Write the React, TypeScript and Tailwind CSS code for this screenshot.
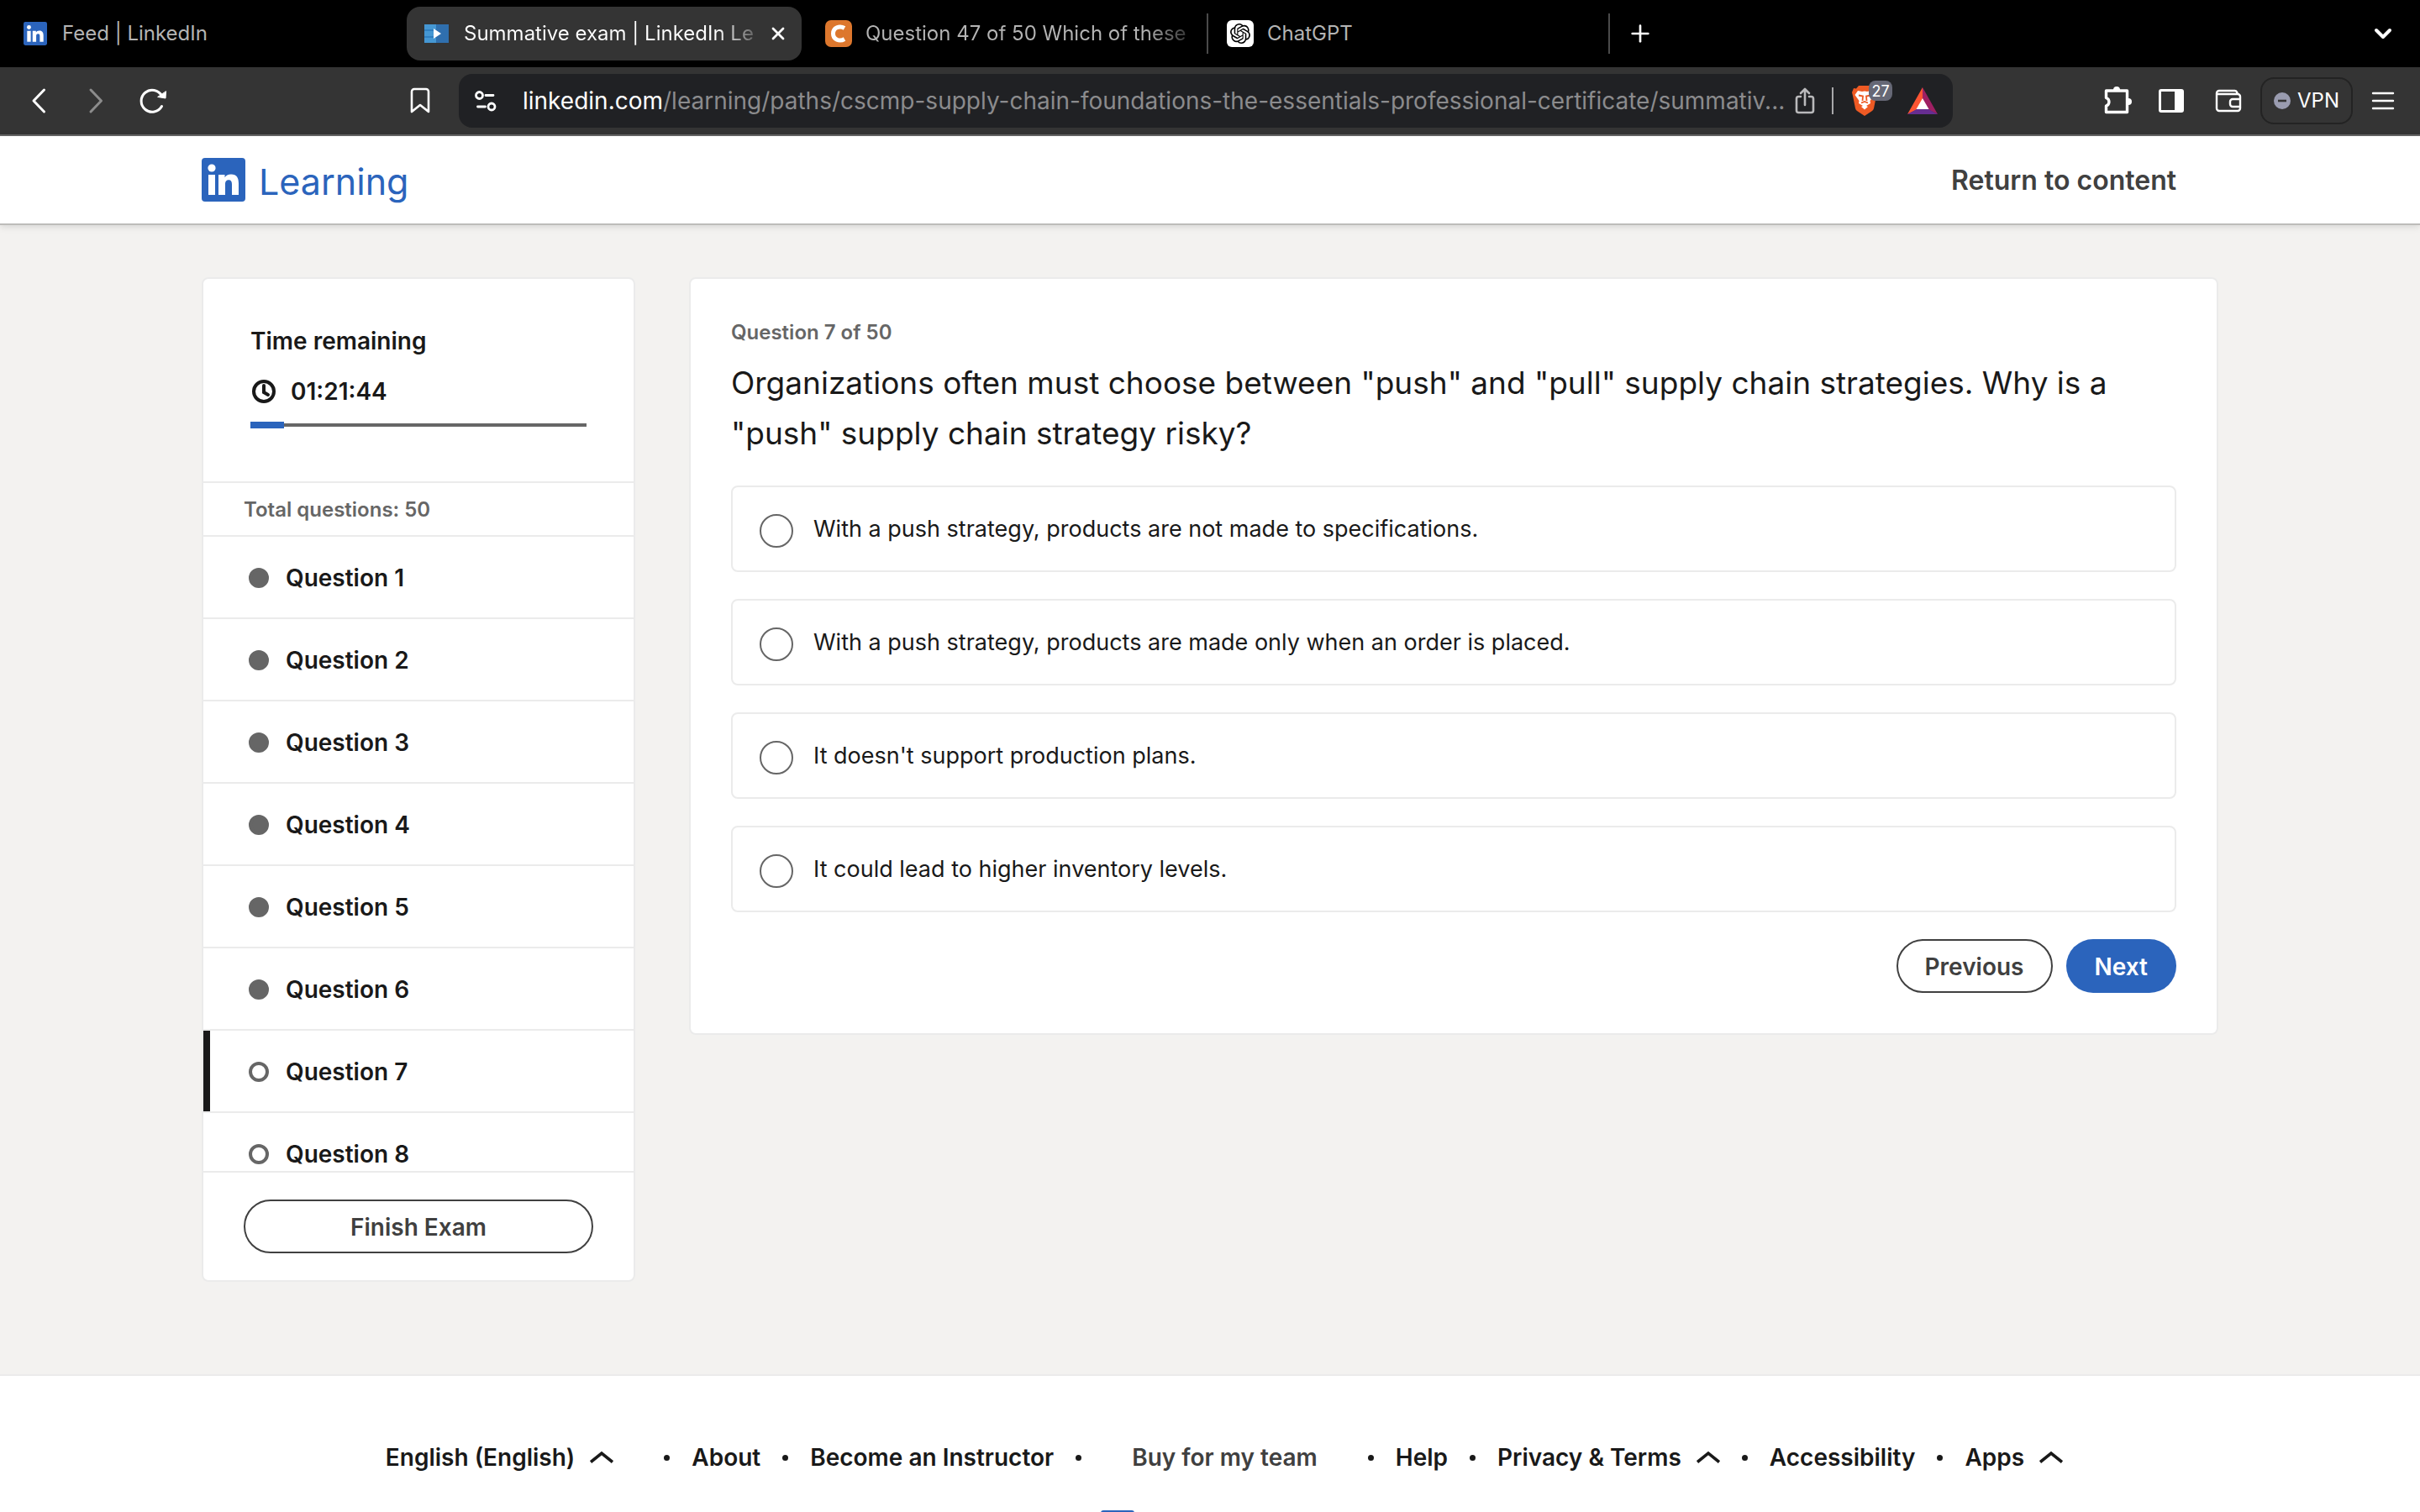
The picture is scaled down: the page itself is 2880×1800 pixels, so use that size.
import { useState } from "react"
import { SiOpenai } from "react-icons/si"
import { ChevronDown, Plus, X } from "lucide-react"

type Question = { id: number; answered: boolean }

const QUESTIONS: Question[] = [
  { id: 1, answered: true },
  { id: 2, answered: true },
  { id: 3, answered: true },
  { id: 4, answered: true },
  { id: 5, answered: true },
  { id: 6, answered: true },
  { id: 7, answered: false },
  { id: 8, answered: false },
]

const OPTIONS = [
  "With a push strategy, products are not made to specifications.",
  "With a push strategy, products are made only when an order is placed.",
  "It doesn't support production plans.",
  "It could lead to higher inventory levels.",
]

function LinkedInMark({ className }: { className: string }) {
  return (
    <svg viewBox="0 0 52 52" className={className} aria-hidden="true">
      <rect width="52" height="52" rx="4" fill="#2b64bc" />
      <circle cx="12" cy="12" r="4.6" fill="#fff" />
      <rect x="8" y="20" width="8" height="24" fill="#fff" />
      <path
        d="M20 20h7.500v3.300c1.300-2.300 3.900-3.900 7.500-3.900 7 0 9 4.500 9 11V44h-8V31.800c0-3-.6-5.500-3.900-5.500-3.300 0-4.100 2.500-4.100 5.300V44h-8z"
        fill="#fff"
      />
    </svg>
  )
}

function PlayFavicon() {
  return (
    <svg viewBox="0 0 29 22" className="h-[22px] w-[29px] shrink-0" aria-hidden="true">
      <rect width="29" height="22" fill="#2f6fae" />
      <rect width="14" height="22" fill="#4597d3" />
      <path d="M0 7h14M0 15h14" stroke="#2f7fc0" strokeWidth="2" />
      <path d="M11 5l9 6-9 6z" fill="#fff" />
    </svg>
  )
}

function CheggFavicon() {
  return (
    <svg viewBox="0 0 32 32" className="size-8 shrink-0" aria-hidden="true">
      <rect width="32" height="32" rx="7" fill="#dd772d" />
      <path d="M23 9.500C17 6 9.500 9 9.500 16S17 26 23 22.500" fill="none" stroke="#fff" strokeWidth="5" />
    </svg>
  )
}

function TabBar() {
  return (
    <div className="flex h-20 items-center bg-black text-[24px] text-[#b4b4b4]">
      <div className="flex w-[484px] shrink-0 items-center gap-[18px] pl-7">
        <LinkedInMark className="size-7 shrink-0" />
        <span>Feed | LinkedIn</span>
      </div>
      <div className="flex h-16 w-[470px] shrink-0 items-center rounded-2xl bg-[#343434] pl-[21px] pr-4 text-white">
        <PlayFavicon />
        <span className="ml-[18px] mr-2 flex-1 whitespace-nowrap bg-linear-to-r from-white from-85% to-white/10 bg-clip-text text-transparent">
          Summative exam | LinkedIn Le
        </span>
        <button aria-label="Close tab">
          <X className="size-6" strokeWidth={2.8} />
        </button>
      </div>
      <div className="flex h-12 w-[484px] shrink-0 items-center gap-4 border-r-2 border-[#4a4a4a] pl-7">
        <CheggFavicon />
        <span className="w-[390px] whitespace-nowrap bg-linear-to-r from-[#b4b4b4] from-85% to-[#b4b4b4]/20 bg-clip-text text-transparent">
          Question 47 of 50 Which of these
        </span>
      </div>
      <div className="flex h-12 w-[478px] shrink-0 items-center gap-4 border-r-2 border-[#4a4a4a] pl-[22px]">
        <span className="flex size-8 items-center justify-center rounded-md bg-white text-black">
          <SiOpenai className="size-6" />
        </span>
        <span>ChatGPT</span>
      </div>
      <button aria-label="New tab" className="ml-5 text-white">
        <Plus className="size-8" strokeWidth={2} />
      </button>
      <button aria-label="Search tabs" className="ml-auto mr-7 text-white">
        <ChevronDown className="size-8" strokeWidth={3} />
      </button>
    </div>
  )
}

function Toolbar() {
  return (
    <div className="flex h-[82px] items-center border-b-2 border-[#666] bg-[#343434] text-white">
      <button aria-label="Back" className="ml-8">
        <svg viewBox="0 0 30 32" className="h-8 w-[30px]" fill="none" stroke="currentColor" strokeWidth="3" strokeLinecap="round" strokeLinejoin="round">
          <path d="M20.500 3L8 16l12.500 13" />
        </svg>
      </button>
      <button aria-label="Forward" className="ml-9 text-[#8c8c8c]">
        <svg viewBox="0 0 30 32" className="h-8 w-[30px]" fill="none" stroke="currentColor" strokeWidth="3" strokeLinecap="round" strokeLinejoin="round">
          <path d="M10 3l12.500 13L10 29" />
        </svg>
      </button>
      <button aria-label="Reload" className="ml-9">
        <svg viewBox="0 0 36 32" className="h-8 w-9" fill="none" stroke="currentColor" strokeWidth="3" strokeLinecap="round">
          <path d="M28.500 22.500A13 13 0 1 1 28.500 10" />
          <path d="M24 11.500l9 1.500.500-8z" fill="currentColor" strokeWidth="1" strokeLinejoin="round" />
        </svg>
      </button>
      <button aria-label="Bookmark this page" className="ml-[288px]">
        <svg viewBox="0 0 24 32" className="h-8 w-6" fill="none" stroke="currentColor" strokeWidth="2.600" strokeLinejoin="round">
          <path d="M2 5a3 3 0 0 1 3-3h14a3 3 0 0 1 3 3v24l-10-8-10 8z" />
        </svg>
      </button>
      <div className="ml-[34px] mr-[178px] flex h-16 min-w-0 flex-1 items-center rounded-2xl bg-[#202124] pl-[18px] pr-[18px]">
        <svg viewBox="0 0 28 26" className="h-[26px] w-7 shrink-0" fill="none" stroke="currentColor" strokeWidth="2.800" strokeLinecap="round" aria-hidden="true">
          <circle cx="6.500" cy="6.500" r="4" />
          <path d="M14 6.500h9M4.500 20h9" />
          <circle cx="21" cy="20" r="4" />
        </svg>
        <p className="ml-[30px] min-w-0 flex-1 whitespace-nowrap text-[28px] text-[#8b8b8d]">
          <span className="text-white">linkedin.com</span>
          /learning/paths/cscmp-supply-chain-foundations-the-essentials-professional-certificate/summativ...
        </p>
        <button aria-label="Share" className="text-[#b9b9bb]">
          <svg viewBox="0 0 24 32" className="h-8 w-6" fill="none" stroke="currentColor" strokeWidth="2.600" strokeLinecap="round" strokeLinejoin="round">
            <path d="M7 11H4.500A2.500 2.500 0 0 0 2 13.500v14A2.500 2.500 0 0 0 4.500 30h15a2.500 2.500 0 0 0 2.500-2.500v-14a2.500 2.500 0 0 0-2.500-2.500H17M12 21V2M7 7l5-5 5 5" />
          </svg>
        </button>
        <span className="ml-5 h-8 w-[2px] bg-[#a8a8aa]" />
        <button aria-label="Brave Shields" className="relative ml-[22px]">
          <svg viewBox="0 0 30 36" className="h-9 w-[30px]">
            <path d="M8 0h14l3 3.500 3-.5 2 5-1 4-3 15q-.5 2-2 3l-9 6-9-6q-1.500-1-2-3L1 12 0 8l2-5 3 .5z" fill="#ee5a24" />
            <path d="M7 6l5 1 3-.5 3 .5 5-1 3.500 5-5 7 .5 3-5 3-2 .500-2-.5-5-3 .5-3-5-7z" fill="#fff" />
            <path d="M8 11.500l5 1-.5 5.500M22 11.500l-5 1 .500 5.500M11 20.500l4-1.500 4 1.500" fill="none" stroke="#ee5a24" strokeWidth="1.800" />
            <path d="M11 25l4-2 4 2-4 3.500z" fill="#fff" />
          </svg>
          <span className="absolute -top-1.5 left-5 flex h-6 w-7 items-center justify-center rounded-lg bg-[#666876] text-[18px] text-white">
            27
          </span>
        </button>
        <button aria-label="Brave Rewards" className="ml-9">
          <svg viewBox="0 0 36 32" className="h-8 w-9">
            <path d="M18 0L0 32l12-6 6-11z" fill="#ff5533" />
            <path d="M18 0l18 32-12-6-6-11z" fill="#9e1f63" />
            <path d="M0 32h36l-11-6H11z" fill="#662d91" />
            <path d="M18 13l7.500 13h-15z" fill="#fff" />
          </svg>
        </button>
      </div>
      <button aria-label="Extensions">
        <svg viewBox="0 0 36 36" className="size-9" fill="none" stroke="currentColor" strokeWidth="3.400" strokeLinejoin="round">
          <path d="M4.500 6h25v25.500h-25v-7.500a5 5 0 0 0 0-9.500z" />
          <path d="M13 5a4 4 0 0 1 8 0zM31 15a4 4 0 0 1 0 8z" fill="currentColor" stroke="none" />
        </svg>
      </button>
      <button aria-label="Side panel" className="ml-[30px]">
        <svg viewBox="0 0 32 28" className="h-7 w-8">
          <rect x="2.500" y="1.500" width="27" height="25" rx="1.500" fill="none" stroke="currentColor" strokeWidth="3" />
          <rect x="20" y="1" width="10" height="26" fill="currentColor" />
        </svg>
      </button>
      <button aria-label="Wallet" className="ml-9">
        <svg viewBox="0 0 32 28" className="h-7 w-8" fill="none" stroke="currentColor" strokeWidth="2.400" strokeLinejoin="round">
          <path d="M27 6l-1-2.500A3 3 0 0 0 23.500 2H5a3 3 0 0 0-3 3v18a3 3 0 0 0 3 3h22a3 3 0 0 0 3-3V9a3 3 0 0 0-3-3H3" />
          <path d="M30 12h-9a3 3 0 0 0-3 3v3a3 3 0 0 0 3 3h9" />
        </svg>
      </button>
      <button className="ml-[22px] flex h-14 items-center gap-2 rounded-2xl border-2 border-[#232323] px-[14px] text-[24px]">
        <svg viewBox="0 0 20 20" className="size-5" aria-hidden="true">
          <circle cx="10" cy="10" r="10" fill="#9a9cb0" />
          <path d="M5 10h10" stroke="#343434" strokeWidth="2.600" />
        </svg>
        VPN
      </button>
      <button aria-label="Menu" className="ml-[22px] mr-[30px]">
        <svg viewBox="0 0 28 22" className="h-[22px] w-7" stroke="currentColor" strokeWidth="2.400" strokeLinecap="round">
          <path d="M2 2h24M2 11h24M2 20h24" />
        </svg>
      </button>
    </div>
  )
}

function Sidebar({ current, onSelect }: { current: number; onSelect: (id: number) => void }) {
  return (
    <aside className="w-[516px] shrink-0 overflow-hidden rounded-lg border-2 border-[#ebebeb] bg-white">
      <div className="h-[243px] border-b-2 border-[#ebebeb] px-14 pt-14">
        <h2 className="text-[28px] leading-9 font-semibold">Time remaining</h2>
        <div className="mt-6 flex items-center gap-4 text-[28px] leading-9 font-semibold">
          <svg viewBox="0 0 32 32" className="size-8" fill="none" stroke="currentColor" aria-hidden="true">
            <circle cx="16" cy="16" r="12" strokeWidth="4" />
            <path d="M16 9v8l5 3" strokeWidth="4" strokeLinecap="round" />
          </svg>
          <time>01:21:44</time>
        </div>
        <div className="mt-[18px] flex h-2 items-center">
          <span className="h-2 w-1/10 bg-[#2b64bc]" />
          <span className="h-1 flex-1 bg-[#666]" />
        </div>
      </div>
      <p className="flex h-16 items-center border-b-2 border-[#ebebeb] px-12 pt-[2px] text-[24px] font-semibold text-[#666]">
        Total questions: 50
      </p>
      <ul className="h-[755px] overflow-hidden">
        {QUESTIONS.map((q) => (
          <li key={q.id} className="h-[98px] border-b-2 border-[#ebebeb]">
            <button
              onClick={() => onSelect(q.id)}
              className={`flex size-full items-center gap-5 border-l-8 pt-[2px] pl-[46px] text-[28px] font-semibold ${
                q.id === current ? "border-[#191919]" : "border-transparent"
              }`}
            >
              <span className={`size-6 rounded-full border-4 border-[#666] ${q.answered ? "bg-[#666]" : ""}`} />
              Question {q.id}
            </button>
          </li>
        ))}
      </ul>
      <div className="border-t-2 border-[#ebebeb] px-12 py-8">
        <button className="h-16 w-full rounded-full border-2 border-[#404040] pt-[2px] text-[28px] font-semibold text-[#404040]">
          Finish Exam
        </button>
      </div>
    </aside>
  )
}

function QuestionCard({ current, onMove }: { current: number; onMove: (step: number) => void }) {
  const [answer, setAnswer] = useState<number | null>(null)

  return (
    <main className="flex-1 rounded-lg border-2 border-[#ebebeb] bg-white p-12">
      <p className="mb-[14px] text-[24px] leading-8 font-semibold text-[#666]">Question {current} of 50</p>
      <fieldset>
        <legend className="text-[37px] leading-[60px]">
          Organizations often must choose between "push" and "pull" supply chain strategies. Why is a "push" supply
          chain strategy risky?
        </legend>
        <div className="mt-8 flex flex-col gap-8">
          {OPTIONS.map((text, i) => (
            <label key={i} className="flex h-[103px] items-center gap-6 rounded-lg border-2 border-[#ebebeb] px-8 pt-[2px] text-[27px]">
              <input
                type="radio"
                name="answer"
                checked={answer === i}
                onChange={() => setAnswer(i)}
                className="mt-[2px] size-10 appearance-none rounded-full border-2 border-[#666] checked:border-[12px] checked:border-[#2b64bc]"
              />
              {text}
            </label>
          ))}
        </div>
      </fieldset>
      <div className="mt-8 flex justify-end gap-4 text-[28px] font-semibold">
        <button onClick={() => onMove(-1)} className="h-16 rounded-full border-2 border-[#404040] px-8 pt-[2px] text-[#404040]">
          Previous
        </button>
        <button onClick={() => onMove(1)} className="h-16 rounded-full bg-[#2b64bc] px-[34px] pt-[2px] text-white">
          Next
        </button>
      </div>
    </main>
  )
}

function Dot() {
  return <span className="size-[7px] rounded-full bg-[#191919]" />
}

function Caret() {
  return (
    <svg viewBox="0 0 28 16" className="h-4 w-7" fill="none" stroke="currentColor" strokeWidth="3.600" aria-hidden="true">
      <path d="M1 13.500L14 3l13 10.500" />
    </svg>
  )
}

function Footer() {
  return (
    <footer className="flex flex-col items-center border-t-2 border-[#ebebeb] bg-white pt-[79px]">
      <nav className="flex items-center gap-[26px] text-[28px] leading-9 font-semibold">
        <button className="flex items-center gap-[18px] px-[34px]">
          English (English) <Caret />
        </button>
        <Dot />
        <a href="#about">About</a>
        <Dot />
        <a href="#instructor">Become an Instructor</a>
        <Dot />
        <a href="#team" className="px-[34px] text-[#404040]">Buy for my team</a>
        <Dot />
        <a href="#help">Help</a>
        <Dot />
        <button className="flex items-center gap-[18px]">
          Privacy &amp; Terms <Caret />
        </button>
        <Dot />
        <a href="#accessibility">Accessibility</a>
        <Dot />
        <button className="flex items-center gap-[18px]">
          Apps <Caret />
        </button>
      </nav>
      <div className="mt-[45px] mr-[220px]">
        <LinkedInMark className="size-10" />
      </div>
    </footer>
  )
}

export default function App() {
  const [current, setCurrent] = useState(7)
  const move = (step: number) => setCurrent((c) => Math.min(50, Math.max(1, c + step)))

  return (
    <div className="h-screen overflow-hidden bg-[#f3f2f0] font-[Inter,sans-serif] text-[#191919]">
      <TabBar />
      <Toolbar />
      <header className="border-b-2 border-[#bdbcba] bg-white shadow-[0_2px_8px_rgba(0,0,0,0.12)]">
        <div className="mx-auto flex h-[104px] max-w-[2400px] items-center justify-between pr-[50px]">
          <a href="#home" className="flex items-center gap-4 text-[43px] leading-[52px] text-[#2b64bc]">
            <LinkedInMark className="size-13" />
            <span className="pt-1">Learning</span>
          </a>
          <a href="#content" className="pt-[2px] text-[32px] font-semibold text-[#404040]">Return to content</a>
        </div>
      </header>
      <div className="mx-auto flex max-w-[2400px] items-start gap-16 pt-[62px] pb-[110px]">
        <Sidebar current={current} onSelect={setCurrent} />
        <QuestionCard current={current} onMove={move} />
      </div>
      <Footer />
    </div>
  )
}
